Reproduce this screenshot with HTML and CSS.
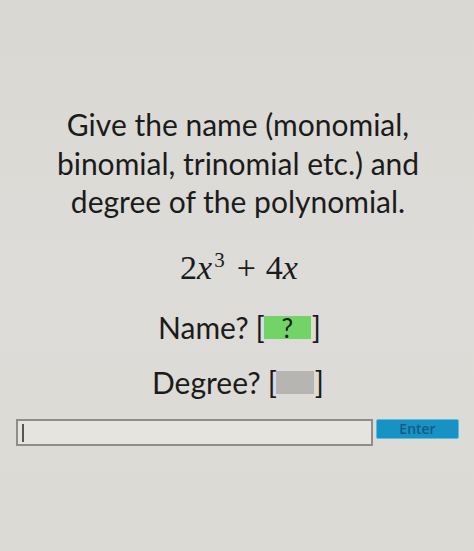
FILE: index.html
```html
<!DOCTYPE html>
<html>
<head>
<meta charset="utf-8">
<link rel="stylesheet" href="styles.css">
</head>
<body>
<main class="page">
  <section class="question">
    <p class="prompt">Give the name (monomial,<br>binomial, trinomial etc.) and<br>degree of the polynomial.</p>
    <p class="math"><span class="num">2</span><span class="var">x</span><sup class="exp">3</sup><span class="op">+</span><span class="num">4</span><span class="var">x</span></p>
    <p class="blank-line name-line"><span class="label">Name?</span><span class="br">[</span><span class="slot slot-green">?</span><span class="br">]</span></p>
    <p class="blank-line degree-line"><span class="label">Degree?</span><span class="br">[</span><span class="slot slot-gray"></span><span class="br">]</span></p>
  </section>
  <form class="answer">
    <div class="field"><span class="caret"></span></div>
    <button type="button" class="enter">Enter</button>
  </form>
</main>
</body>
</html>
```
FILE: styles.css
```css
html, body {
  margin: 0;
  padding: 0;
  background: #dcdbd6;
}
.page {
  width: 474px;
  height: 551px;
  background: linear-gradient(180deg, #d9d8d3 0%, #dedcd8 50%, #dbdad5 100%);
  font-family: Lato, "Liberation Sans", sans-serif;
  color: #1b1b1b;
  display: flex;
  flex-direction: column;
  padding-top: 105px;
  box-sizing: border-box;
}
.question {
  display: flex;
  flex-direction: column;
  align-items: center;
  text-align: center;
}
.question p {
  margin: 0;
}
.prompt {
  font-size: 30px;
  line-height: 38.5px;
  margin-left: 2px !important;
}
.math {
  font-family: "Liberation Serif", "DejaVu Serif", serif;
  font-size: 34px;
  line-height: 40px;
  margin-top: 27px !important;
  margin-left: 4px !important;
}
.math .var {
  font-style: italic;
}
.math .exp {
  font-size: 21px;
  vertical-align: 0;
  position: relative;
  top: -12px;
  margin-left: 2px;
}
.math .op {
  margin: 0 10px 0 12px;
}
.blank-line {
  font-size: 30px;
  line-height: 40px;
  display: flex;
  align-items: center;
  white-space: pre;
}
.label {
  margin-right: 7px;
}
.name-line {
  margin-top: 15px !important;
  margin-left: 5px !important;
}
.degree-line {
  margin-top: 15px !important;
  margin-left: 2px !important;
}
.br {
  font-size: 30px;
}
.slot {
  display: inline-flex;
  align-items: center;
  justify-content: center;
  height: 23px;
  box-sizing: border-box;
  font-size: 26px;
  margin: 2px 1px 0 -1px;
}
.slot-green {
  width: 47px;
  background: #72d467;
}
.slot-gray {
  width: 38px;
  background: #b6b5b1;
}
.answer {
  display: flex;
  align-items: flex-start;
  margin: 17px 0 0 16px;
  gap: 3px;
}
.field {
  width: 357px;
  height: 27px;
  box-sizing: border-box;
  border: 2px solid #8d8d89;
  background: #e5e4df;
  position: relative;
}
.caret {
  position: absolute;
  left: 4px;
  top: 3px;
  width: 2px;
  height: 18px;
  background: #555;
}
.enter {
  width: 83px;
  height: 20px;
  border: 1px solid #5cbde0;
  border-radius: 2px;
  background: #1693c4;
  color: #1b5886;
  font-family: "Open Sans", "Liberation Sans", sans-serif;
  font-weight: 600;
  font-size: 14px;
  padding: 0;
  line-height: 18px;
}
```
